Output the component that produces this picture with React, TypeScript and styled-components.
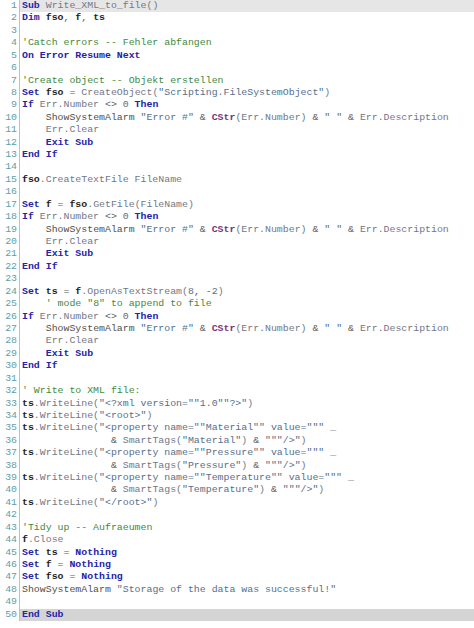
import React from "react";
import styled, { createGlobalStyle } from "styled-components";

const Global = createGlobalStyle`
  html, body { margin: 0; padding: 0; background: #ffffff; }
  body { width: 474px; height: 628px; overflow: hidden; }
`;

const Editor = styled.div`
  display: flex;
  flex-direction: column;
  width: 474px;
  height: 628px;
  background: #ffffff;
  font-family: "Liberation Mono", "Courier New", monospace;
  font-size: 9.9px;
  line-height: 12.43px;
`;

const Row = styled.div`
  display: flex;
  height: 12.43px;
  white-space: pre;
`;

const Gutter = styled.div`
  flex: 0 0 17px;
  width: 17px;
  padding-right: 2px;
  text-align: right;
  color: #5e9ea6;
  border-right: 1px solid #a9c6d6;
`;

const Code = styled.div<{ $hl?: string }>`
  flex: 1;
  padding-left: 2px;
  background: ${(p) => p.$hl || "transparent"};
`;

type Kind = "kw" | "var" | "id" | "sys" | "fn" | "str" | "num" | "op" | "cm";

const Tok = styled.span<{ $k: Kind }>`
  color: ${(p) =>
    ({
      kw: "#2424a6",
      var: "#1e1e1e",
      id: "#727886",
      sys: "#55504a",
      fn: "#7a3478",
      str: "#56708c",
      num: "#6a6a6a",
      op: "#5a5a5a",
      cm: "#3f8a3f",
    })[p.$k]};
  font-weight: ${(p) => (p.$k === "kw" || p.$k === "var" || p.$k === "fn" ? 700 : 400)};
`;

const KEYWORDS = new Set([
  "Sub", "Dim", "On", "Error", "Resume", "Next", "Set", "If", "Then",
  "Exit", "End", "Nothing",
]);
const VARS = new Set(["fso", "f", "ts"]);

const LINES: string[] = [
  `Sub Write_XML_to_file()`,
  `Dim fso, f, ts`,
  ``,
  `'Catch errors -- Fehler abfangen`,
  `On Error Resume Next`,
  ``,
  `'Create object -- Objekt erstellen`,
  `Set fso = CreateObject("Scripting.FileSystemObject")`,
  `If Err.Number <> 0 Then`,
  `    ShowSystemAlarm "Error #" & CStr(Err.Number) & " " & Err.Description`,
  `    Err.Clear`,
  `    Exit Sub`,
  `End If`,
  ``,
  `fso.CreateTextFile FileName`,
  ``,
  `Set f = fso.GetFile(FileName)`,
  `If Err.Number <> 0 Then`,
  `    ShowSystemAlarm "Error #" & CStr(Err.Number) & " " & Err.Description`,
  `    Err.Clear`,
  `    Exit Sub`,
  `End If`,
  ``,
  `Set ts = f.OpenAsTextStream(8, -2)`,
  `    ' mode "8" to append to file`,
  `If Err.Number <> 0 Then`,
  `    ShowSystemAlarm "Error #" & CStr(Err.Number) & " " & Err.Description`,
  `    Err.Clear`,
  `    Exit Sub`,
  `End If`,
  ``,
  `' Write to XML file:`,
  `ts.WriteLine("<?xml version=""1.0""?>")`,
  `ts.WriteLine("<root>")`,
  `ts.WriteLine("<property name=""Material"" value=""" _`,
  `               & SmartTags("Material") & """/>")`,
  `ts.WriteLine("<property name=""Pressure"" value=""" _`,
  `               & SmartTags("Pressure") & """/>")`,
  `ts.WriteLine("<property name=""Temperature"" value=""" _`,
  `               & SmartTags("Temperature") & """/>")`,
  `ts.WriteLine("</root>")`,
  ``,
  `'Tidy up -- Aufraeumen`,
  `f.Close`,
  `Set ts = Nothing`,
  `Set f = Nothing`,
  `Set fso = Nothing`,
  `ShowSystemAlarm "Storage of the data was successful!"`,
  ``,
  `End Sub`,
];

function tokenize(line: string): { k: Kind; t: string }[] {
  const out: { k: Kind; t: string }[] = [];
  let i = 0;
  let afterDot = false;
  const push = (k: Kind, t: string) => {
    const last = out[out.length - 1];
    if (last && last.k === k) last.t += t;
    else out.push({ k, t });
  };
  while (i < line.length) {
    const c = line[i];
    if (c === "'") {
      push("cm", line.slice(i));
      break;
    }
    if (c === '"') {
      let j = i + 1;
      while (j < line.length) {
        if (line[j] === '"') {
          if (line[j + 1] === '"') { j += 2; continue; }
          j++;
          break;
        }
        j++;
      }
      push("str", line.slice(i, j));
      i = j;
      afterDot = false;
      continue;
    }
    if (/[A-Za-z_]/.test(c)) {
      let j = i;
      while (j < line.length && /[A-Za-z0-9_]/.test(line[j])) j++;
      const w = line.slice(i, j);
      let k: Kind = "id";
      if (!afterDot && KEYWORDS.has(w)) k = "kw";
      else if (!afterDot && VARS.has(w)) k = "var";
      else if (w === "CStr") k = "fn";
      else if (w === "ShowSystemAlarm") k = "sys";
      push(k, w);
      i = j;
      afterDot = false;
      continue;
    }
    if (/[0-9]/.test(c)) {
      let j = i;
      while (j < line.length && /[0-9]/.test(line[j])) j++;
      push("num", line.slice(i, j));
      i = j;
      continue;
    }
    if (c === " ") {
      const last = out[out.length - 1];
      if (last) last.t += c;
      else push("op", c);
      i++;
      continue;
    }
    afterDot = c === ".";
    push(c === "." || c === "(" || c === ")" ? "id" : "op", c);
    i++;
  }
  return out;
}

const HIGHLIGHT: Record<number, string> = { 1: "#e6e6e6", 50: "#d4d4d4" };

export default function App() {
  return (
    <>
      <Global />
      <Editor>
        {LINES.map((line, idx) => {
          const n = idx + 1;
          return (
            <Row key={n}>
              <Gutter>{n}</Gutter>
              <Code $hl={HIGHLIGHT[n]}>
                {tokenize(line).map((tk, j) => (
                  <Tok key={j} $k={tk.k}>{tk.t}</Tok>
                ))}
                {line === "" ? " " : null}
              </Code>
            </Row>
          );
        })}
      </Editor>
    </>
  );
}
